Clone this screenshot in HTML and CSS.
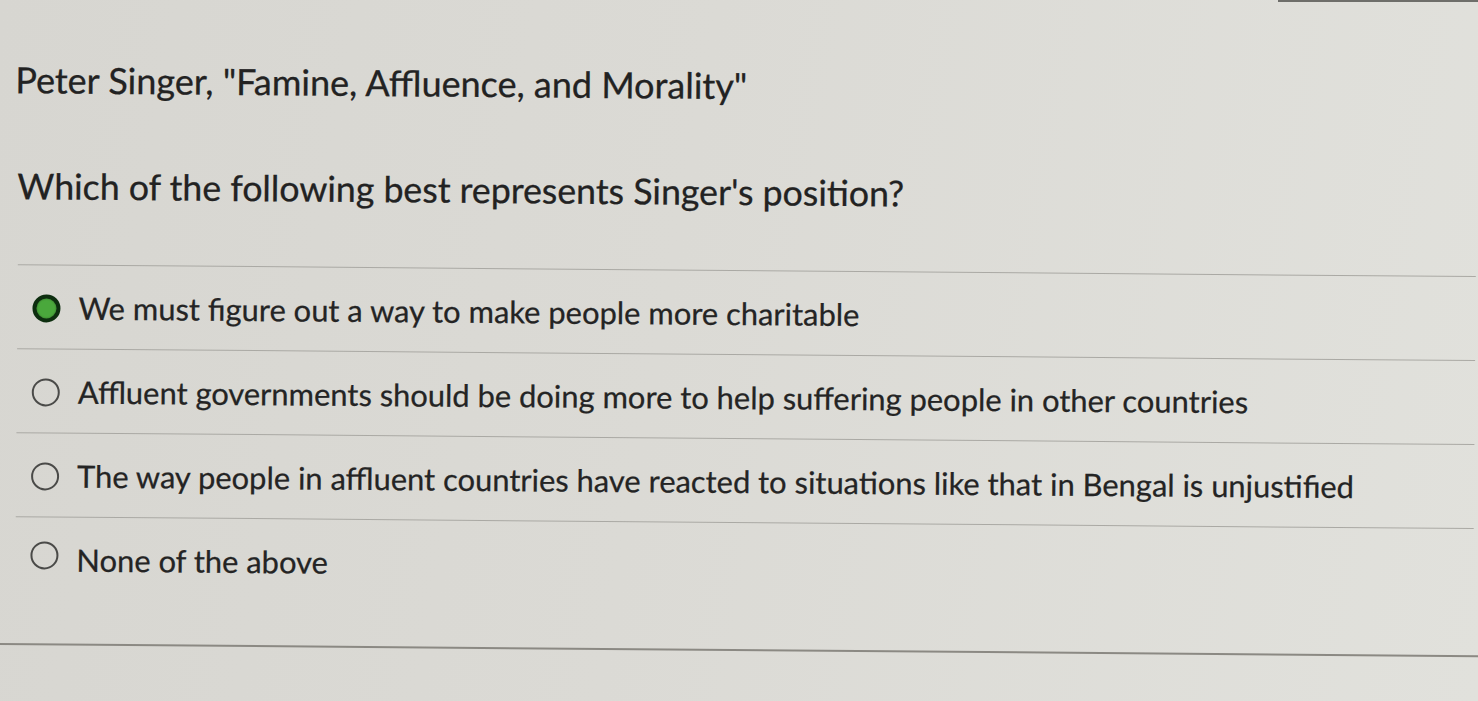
FILE: index.html
```html
<!DOCTYPE html>
<html lang="en">
<head>
<meta charset="utf-8">
<title>Quiz question</title>
<link rel="stylesheet" href="styles.css">
</head>
<body>
<div class="screen">
  <div class="topbar"></div>
  <div class="page">
    <div class="question">
      <h2 class="title">Peter Singer, "Famine, Affluence, and Morality"</h2>
      <p class="prompt">Which of the following best represents Singer's position?</p>
      <div class="answers">
        <label class="answer">
          <span class="radio checked"></span>
          <span class="answer-text">We must ﬁgure out a way to make people more charitable</span>
        </label>
        <label class="answer">
          <span class="radio"></span>
          <span class="answer-text">Aﬄuent governments should be doing more to help suffering people in other countries</span>
        </label>
        <label class="answer">
          <span class="radio"></span>
          <span class="answer-text">The way people in aﬄuent countries have reacted to situations like that in Bengal is unjustiﬁed</span>
        </label>
        <label class="answer last">
          <span class="radio"></span>
          <span class="answer-text">None of the above</span>
        </label>
      </div>
    </div>
    <div class="footer-rule"></div>
  </div>
</div>
</body>
</html>
```

FILE: styles.css
```css
html, body {
  margin: 0;
  padding: 0;
  height: 100%;
  overflow: hidden;
}

body {
  background: #dbdad5;
  font-family: Lato, "Open Sans", sans-serif;
  color: #222;
}

.screen {
  position: relative;
  width: 1478px;
  height: 701px;
  background: linear-gradient(100deg, #d7d6d1 0%, #dbdad5 45%, #e1e1dc 100%);
}

.topbar {
  position: absolute;
  top: 0;
  right: 0;
  width: 200px;
  height: 2px;
  background: #6e6e6a;
}

.page {
  transform: rotate(0.47deg);
  transform-origin: 0 0;
  padding-top: 55px;
}

.question {
  padding-left: 16px;
}

.title {
  margin: 0;
  font-size: 36px;
  font-weight: 400;
  line-height: 48px;
  -webkit-text-stroke: 0.3px #222;
}

.prompt {
  margin: 59px 0 0 3px;
  font-size: 35.7px;
  line-height: 48px;
  -webkit-text-stroke: 0.3px #222;
}

.answers {
  margin-top: 54px;
  display: flex;
  flex-direction: column;
}

.answer {
  display: flex;
  align-items: center;
  gap: 18px;
  height: 84px;
  border-top: 1.5px solid #aaa9a4;
  margin-left: 4px;
  padding-left: 15px;
  padding-top: 3px;
  box-sizing: border-box;
  font-size: 30.9px;
}

.answer.last {
  height: 127px;
  align-items: flex-start;
  padding-top: 24px;
}

.radio {
  flex: none;
  width: 24px;
  height: 24px;
  border: 2px solid #4a4a48;
  border-radius: 50%;
  background: transparent;
  box-sizing: content-box;
}

.radio.checked {
  width: 20px;
  height: 20px;
  border: 4.5px solid #0d2e0f;
  background: #4aa83c;
  box-shadow: inset 0 0 2px rgba(0,0,0,0.4);
}

.answer-text {
  line-height: 38px;
  color: #242424;
  -webkit-text-stroke: 0.25px #242424;
}

.footer-rule {
  height: 2px;
  background: #8b8983;
  width: 1500px;
}
```
